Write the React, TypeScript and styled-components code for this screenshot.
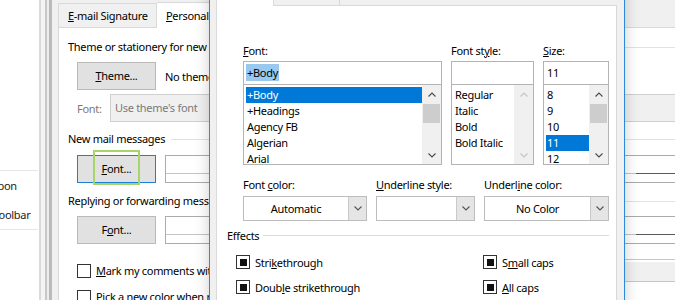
import React from "react";
import styled, { createGlobalStyle } from "styled-components";

const GlobalStyle = createGlobalStyle`
  html, body { margin: 0; padding: 0; background: #ffffff; }
  body {
    font-family: "Noto Sans", "Open Sans", sans-serif;
    font-size: 11px;
    letter-spacing: -0.3px;
    color: #000;
  }
  *, *::before, *::after { box-sizing: border-box; }
`;

const Screen = styled.div`
  position: relative;
  width: 675px;
  height: 300px;
  overflow: hidden;
  background: #fff;
`;

const U = styled.u`
  text-decoration: underline;
  text-underline-offset: 1px;
`;

/* ---------- background: Outlook options window ---------- */

const OptionsWindow = styled.div`
  display: flex;
  width: 900px;
  height: 300px;
  margin-left: -100px;
`;

const Nav = styled.nav`
  flex: none;
  width: 138px;
  padding-top: 170px;
  background: #fff;
`;

const NavGroup = styled.div`
  border-top: 1px solid #e6e6e6;
  border-bottom: 1px solid #e6e6e6;
`;

const NavItem = styled.div`
  height: 29px;
  line-height: 29px;
  padding-left: 28px;
  white-space: nowrap;
  color: #222;
`;

const Gutter = styled.div`
  flex: none;
  width: 20px;
  background: linear-gradient(
    to right,
    #fff 0 1px,
    #dadada 1px 3px,
    #f4f4f4 3px 7px,
    #c8c8c8 7px 9px,
    #ececec 9px 11px,
    #bababa 11px 14px,
    #f0f0f0 14px 20px
  );
`;

const OptionsMain = styled.div`
  flex: 1;
  display: flex;
  flex-direction: column;
  background: #f0f0f0;
`;

const OptionsTabs = styled.div`
  flex: none;
  display: flex;
  align-items: flex-end;
  height: 27px;
`;

const OptionsTab = styled.div<{ $active?: boolean; $width: number }>`
  position: relative;
  z-index: ${(p) => (p.$active ? 1 : 0)};
  width: ${(p) => p.$width}px;
  height: ${(p) => (p.$active ? "26px" : "24px")};
  margin-bottom: ${(p) => (p.$active ? "-1px" : "0")};
  padding: 0 9px;
  line-height: ${(p) => (p.$active ? "25px" : "23px")};
  border: 1px solid #d9d9d9;
  border-bottom: none;
  ${(p) => (p.$active ? "border-left: none;" : "")}
  background: ${(p) => (p.$active ? "#fff" : "#f0f0f0")};
  white-space: nowrap;
  overflow: hidden;
`;

const OptionsPanel = styled.div`
  flex: 1;
  display: flex;
  flex-direction: column;
  padding: 11px 0 0 9px;
  background: #fff;
  border: 1px solid #d9d9d9;
`;

const SectionHeading = styled.div<{ $top: number }>`
  display: flex;
  align-items: center;
  gap: 6px;
  height: 16px;
  line-height: 16px;
  margin-top: ${(p) => p.$top}px;
  white-space: nowrap;
  &::after {
    content: "";
    flex: 1;
    height: 1px;
    background: #e2e2e2;
  }
`;

const ButtonRow = styled.div<{ $top: number }>`
  display: flex;
  align-items: center;
  gap: 9px;
  padding-left: 9px;
  margin-top: ${(p) => p.$top}px;
  white-space: nowrap;
`;

const WinButton = styled.div<{ $focused?: boolean }>`
  position: relative;
  flex: none;
  width: 79px;
  height: 28px;
  line-height: 26px;
  text-align: center;
  background: #e1e1e1;
  border: 1px solid ${(p) => (p.$focused ? "#1a7fd6" : "#b9b9b9")};
`;

const Annotation = styled.span`
  position: absolute;
  left: 15px;
  top: -6px;
  width: 47px;
  height: 35px;
  border: 2px solid #a6d56c;
  pointer-events: none;
`;

const FontRow = styled.div`
  display: flex;
  align-items: center;
  padding-left: 9px;
  margin-top: 4px;
  white-space: nowrap;
`;

const DisabledLabel = styled.span`
  flex: none;
  width: 33px;
  color: #7a7a7a;
`;

const DisabledInput = styled.div`
  flex: 1;
  height: 28px;
  line-height: 26px;
  padding-left: 4px;
  color: #7a7a7a;
  background: #f0f0f0;
  border: 1px solid #cfcfcf;
`;

const Preview = styled.div`
  flex: 1;
  height: 28px;
  padding-top: 17px;
  background: #fff;
  border: 1px solid #ababab;
`;

const SampleRule = styled.div`
  height: 1px;
  background: linear-gradient(to right, #c4c4c4 0 470px, #5a5a5a 470px);
`;

const CheckRow = styled.div<{ $top: number }>`
  display: flex;
  align-items: center;
  gap: 5px;
  padding-left: 9px;
  margin-top: ${(p) => p.$top}px;
  line-height: 16px;
  white-space: nowrap;
`;

const EmptyBox = styled.span`
  flex: none;
  width: 14px;
  height: 14px;
  background: #fff;
  border: 1px solid #333;
`;

const MarkInput = styled.div`
  flex: 1;
  height: 23px;
  margin-left: 16px;
  background: #f0f0f0;
  border: 1px solid #c6c6c6;
  box-shadow: inset 0 2px 0 #fff;
`;

/* ---------- Font dialog ---------- */

const Dialog = styled.section`
  position: absolute;
  z-index: 10;
  left: 209px;
  top: -30px;
  width: 416px;
  height: 360px;
  display: flex;
  flex-direction: column;
  padding: 0 7px 0 6px;
  background: #f0f0f0;
  border: 1px solid #2d8ad8;
  box-shadow: 0 0 14px rgba(0, 0, 0, 0.2);
`;

const DialogTabs = styled.div`
  flex: none;
  height: 34px;
  display: flex;
  align-items: flex-end;
`;

const DialogTab = styled.div<{ $active?: boolean; $width: number }>`
  position: relative;
  z-index: ${(p) => (p.$active ? 1 : 0)};
  width: ${(p) => p.$width}px;
  height: ${(p) => (p.$active ? "24px" : "22px")};
  margin-bottom: ${(p) => (p.$active ? "-1px" : "0")};
  line-height: 20px;
  text-align: center;
  border: 1px solid #d9d9d9;
  border-bottom: none;
  ${(p) => (p.$active ? "" : "border-left: none;")}
  background: ${(p) => (p.$active ? "#fff" : "#f0f0f0")};
`;

const DialogPanel = styled.div`
  flex: 1;
  padding: 37px 7px 0 10px;
  background: #fff;
  border: 1px solid #d9d9d9;
`;

const FontGrid = styled.div`
  display: grid;
  grid-template-columns: 199px 83px 66px;
  column-gap: 9px;
  margin-left: 16px;
`;

const Field = styled.div`
  display: flex;
  flex-direction: column;
  min-width: 0;
`;

const FieldLabel = styled.div`
  height: 16px;
  line-height: 16px;
  margin-bottom: 2px;
  white-space: nowrap;
`;

const TextInput = styled.div`
  height: 24px;
  padding: 2px 0 0 2px;
  background: #fff;
  border: 1px solid #b3b3b3;
  white-space: nowrap;
`;

const SelectedText = styled.span`
  display: inline-block;
  height: 17px;
  line-height: 17px;
  padding: 0 1px;
  background: #99c9ef;
`;

const PlainText = styled.span`
  display: inline-block;
  height: 17px;
  line-height: 17px;
  padding: 0 1px;
`;

const ListBox = styled.div`
  display: flex;
  height: 81px;
  margin-top: -1px;
  background: #fff;
  border: 1px solid #b3b3b3;
  overflow: hidden;
`;

const ListItems = styled.div`
  flex: 1;
  min-width: 0;
  padding: 2px 0 0 2px;
`;

const ListItem = styled.div<{ $selected?: boolean }>`
  height: 16px;
  line-height: 16px;
  padding-left: 1px;
  white-space: nowrap;
  color: ${(p) => (p.$selected ? "#fff" : "#000")};
  background: ${(p) => (p.$selected ? "#0078d7" : "transparent")};
`;

const ScrollBar = styled.div`
  flex: none;
  width: 19px;
  display: flex;
  flex-direction: column;
  background: #f0f0f0;
`;

const ScrollArrow = styled.div`
  flex: none;
  height: 18px;
  display: flex;
  align-items: center;
  justify-content: center;
`;

const ScrollThumb = styled.div`
  flex: none;
  height: 19px;
  margin: 1px 1px 0;
  background: #cdcdcd;
`;

const ScrollTrack = styled.div`
  flex: 1;
`;

const DropGrid = styled.div`
  display: grid;
  grid-template-columns: 124px 99px 1fr;
  column-gap: 9px;
  margin: 12px 0 0 16px;
`;

const Dropdown = styled.div`
  display: flex;
  height: 25px;
  margin-top: 1px;
  background: #fff;
  border: 1px solid #bdbdbd;
`;

const DropValue = styled.div`
  flex: 1;
  line-height: 23px;
  text-align: center;
  white-space: nowrap;
`;

const DropButton = styled.div`
  flex: none;
  width: 18px;
  display: flex;
  align-items: center;
  justify-content: center;
  background: #e5e5e5;
  border-left: 1px solid #c9c9c9;
`;

const GroupTitle = styled.div`
  display: flex;
  align-items: center;
  gap: 4px;
  height: 16px;
  line-height: 16px;
  margin-top: 7px;
  &::after {
    content: "";
    flex: 1;
    height: 1px;
    margin-top: -1px;
    background: #dcdcdc;
  }
`;

const EffectsGrid = styled.div`
  display: grid;
  grid-template-columns: 247px 1fr;
  row-gap: 7px;
  margin-top: 9px;
  padding-left: 9px;
`;

const EffectItem = styled.div`
  display: flex;
  align-items: center;
  gap: 5px;
  height: 18px;
  white-space: nowrap;
`;

const MixedBox = styled.span`
  flex: none;
  width: 14px;
  height: 14px;
  display: flex;
  align-items: center;
  justify-content: center;
  background: #fff;
  border: 1px solid #333;
  &::after {
    content: "";
    width: 7px;
    height: 7px;
    background: #111;
  }
`;

type ChevronProps = { up?: boolean; color?: string };

const Chevron = ({ up, color = "#555" }: ChevronProps) => (
  <svg width="8" height="5" viewBox="0 0 8 5">
    <polyline
      points={up ? "0.5,4.5 4,1 7.5,4.5" : "0.5,0.5 4,4 7.5,0.5"}
      fill="none"
      stroke={color}
      strokeWidth="1.1"
    />
  </svg>
);

type ListProps = {
  items: string[];
  selected?: number;
  disabled?: boolean;
};

const FontList = ({ items, selected, disabled }: ListProps) => {
  const c = disabled ? "#c4c4c4" : "#4a4a4a";
  return (
    <ListBox>
      <ListItems>
        {items.map((it, i) => (
          <ListItem key={it} $selected={i === selected}>
            {it}
          </ListItem>
        ))}
      </ListItems>
      <ScrollBar>
        <ScrollArrow>
          <Chevron up color={c} />
        </ScrollArrow>
        {!disabled && <ScrollThumb />}
        <ScrollTrack />
        <ScrollArrow>
          <Chevron color={c} />
        </ScrollArrow>
      </ScrollBar>
    </ListBox>
  );
};

const Select = ({ value }: { value: string }) => (
  <Dropdown>
    <DropValue>{value}</DropValue>
    <DropButton>
      <Chevron color="#555" />
    </DropButton>
  </Dropdown>
);

export default function App() {
  return (
    <>
      <GlobalStyle />
      <Screen>
        <OptionsWindow>
          <Nav>
            <NavGroup>
              <NavItem>Customize Ribbon</NavItem>
              <NavItem>Quick Access Toolbar</NavItem>
            </NavGroup>
          </Nav>
          <Gutter />
          <OptionsMain>
            <OptionsTabs>
              <OptionsTab $width={99}>
                <U>E</U>-mail Signature
              </OptionsTab>
              <OptionsTab $active $width={140}>
                <U>P</U>ersonal Stationery
              </OptionsTab>
            </OptionsTabs>
            <OptionsPanel>
              <SectionHeading $top={0}>
                Theme or stationery for new HTML e-mail message
              </SectionHeading>
              <ButtonRow $top={7}>
                <WinButton>
                  <U>T</U>heme...
                </WinButton>
                <span>No theme currently selected</span>
              </ButtonRow>
              <FontRow>
                <DisabledLabel>Font:</DisabledLabel>
                <DisabledInput>Use theme's font</DisabledInput>
              </FontRow>
              <SectionHeading $top={9}>New mail messages</SectionHeading>
              <ButtonRow $top={8}>
                <WinButton $focused>
                  <U>F</U>ont...
                  <Annotation />
                </WinButton>
                <Preview>
                  <SampleRule />
                </Preview>
              </ButtonRow>
              <SectionHeading $top={10}>
                Replying or forwarding messages
              </SectionHeading>
              <ButtonRow $top={7}>
                <WinButton>
                  F<U>o</U>nt...
                </WinButton>
                <Preview>
                  <SampleRule />
                </Preview>
              </ButtonRow>
              <CheckRow $top={15}>
                <EmptyBox />
                <span>
                  <U>M</U>ark my comments with:
                </span>
                <MarkInput />
              </CheckRow>
              <CheckRow $top={7}>
                <EmptyBox />
                <span>
                  Pi<U>c</U>k a new color when replying or forwarding
                </span>
              </CheckRow>
            </OptionsPanel>
          </OptionsMain>
        </OptionsWindow>

        <Dialog>
          <DialogTabs>
            <DialogTab $active $width={58}>
              Fo<U>n</U>t
            </DialogTab>
            <DialogTab $width={66}>
              Ad<U>v</U>anced
            </DialogTab>
          </DialogTabs>
          <DialogPanel>
            <FontGrid>
              <Field>
                <FieldLabel>
                  <U>F</U>ont:
                </FieldLabel>
                <TextInput>
                  <SelectedText>+Body</SelectedText>
                </TextInput>
                <FontList
                  items={["+Body", "+Headings", "Agency FB", "Algerian", "Arial"]}
                  selected={0}
                />
              </Field>
              <Field>
                <FieldLabel>
                  Font st<U>y</U>le:
                </FieldLabel>
                <TextInput />
                <FontList
                  items={["Regular", "Italic", "Bold", "Bold Italic"]}
                  disabled
                />
              </Field>
              <Field>
                <FieldLabel>
                  <U>S</U>ize:
                </FieldLabel>
                <TextInput>
                  <PlainText>11</PlainText>
                </TextInput>
                <FontList items={["8", "9", "10", "11", "12"]} selected={3} />
              </Field>
            </FontGrid>

            <DropGrid>
              <Field>
                <FieldLabel>
                  Font <U>c</U>olor:
                </FieldLabel>
                <Select value="Automatic" />
              </Field>
              <Field>
                <FieldLabel>
                  <U>U</U>nderline style:
                </FieldLabel>
                <Select value="" />
              </Field>
              <Field>
                <FieldLabel>
                  Underl<U>i</U>ne color:
                </FieldLabel>
                <Select value="No Color" />
              </Field>
            </DropGrid>

            <GroupTitle>Effects</GroupTitle>
            <EffectsGrid>
              <EffectItem>
                <MixedBox />
                <span>
                  Stri<U>k</U>ethrough
                </span>
              </EffectItem>
              <EffectItem>
                <MixedBox />
                <span>
                  S<U>m</U>all caps
                </span>
              </EffectItem>
              <EffectItem>
                <MixedBox />
                <span>
                  Doub<U>l</U>e strikethrough
                </span>
              </EffectItem>
              <EffectItem>
                <MixedBox />
                <span>
                  <U>A</U>ll caps
                </span>
              </EffectItem>
            </EffectsGrid>
          </DialogPanel>
        </Dialog>
      </Screen>
    </>
  );
}
